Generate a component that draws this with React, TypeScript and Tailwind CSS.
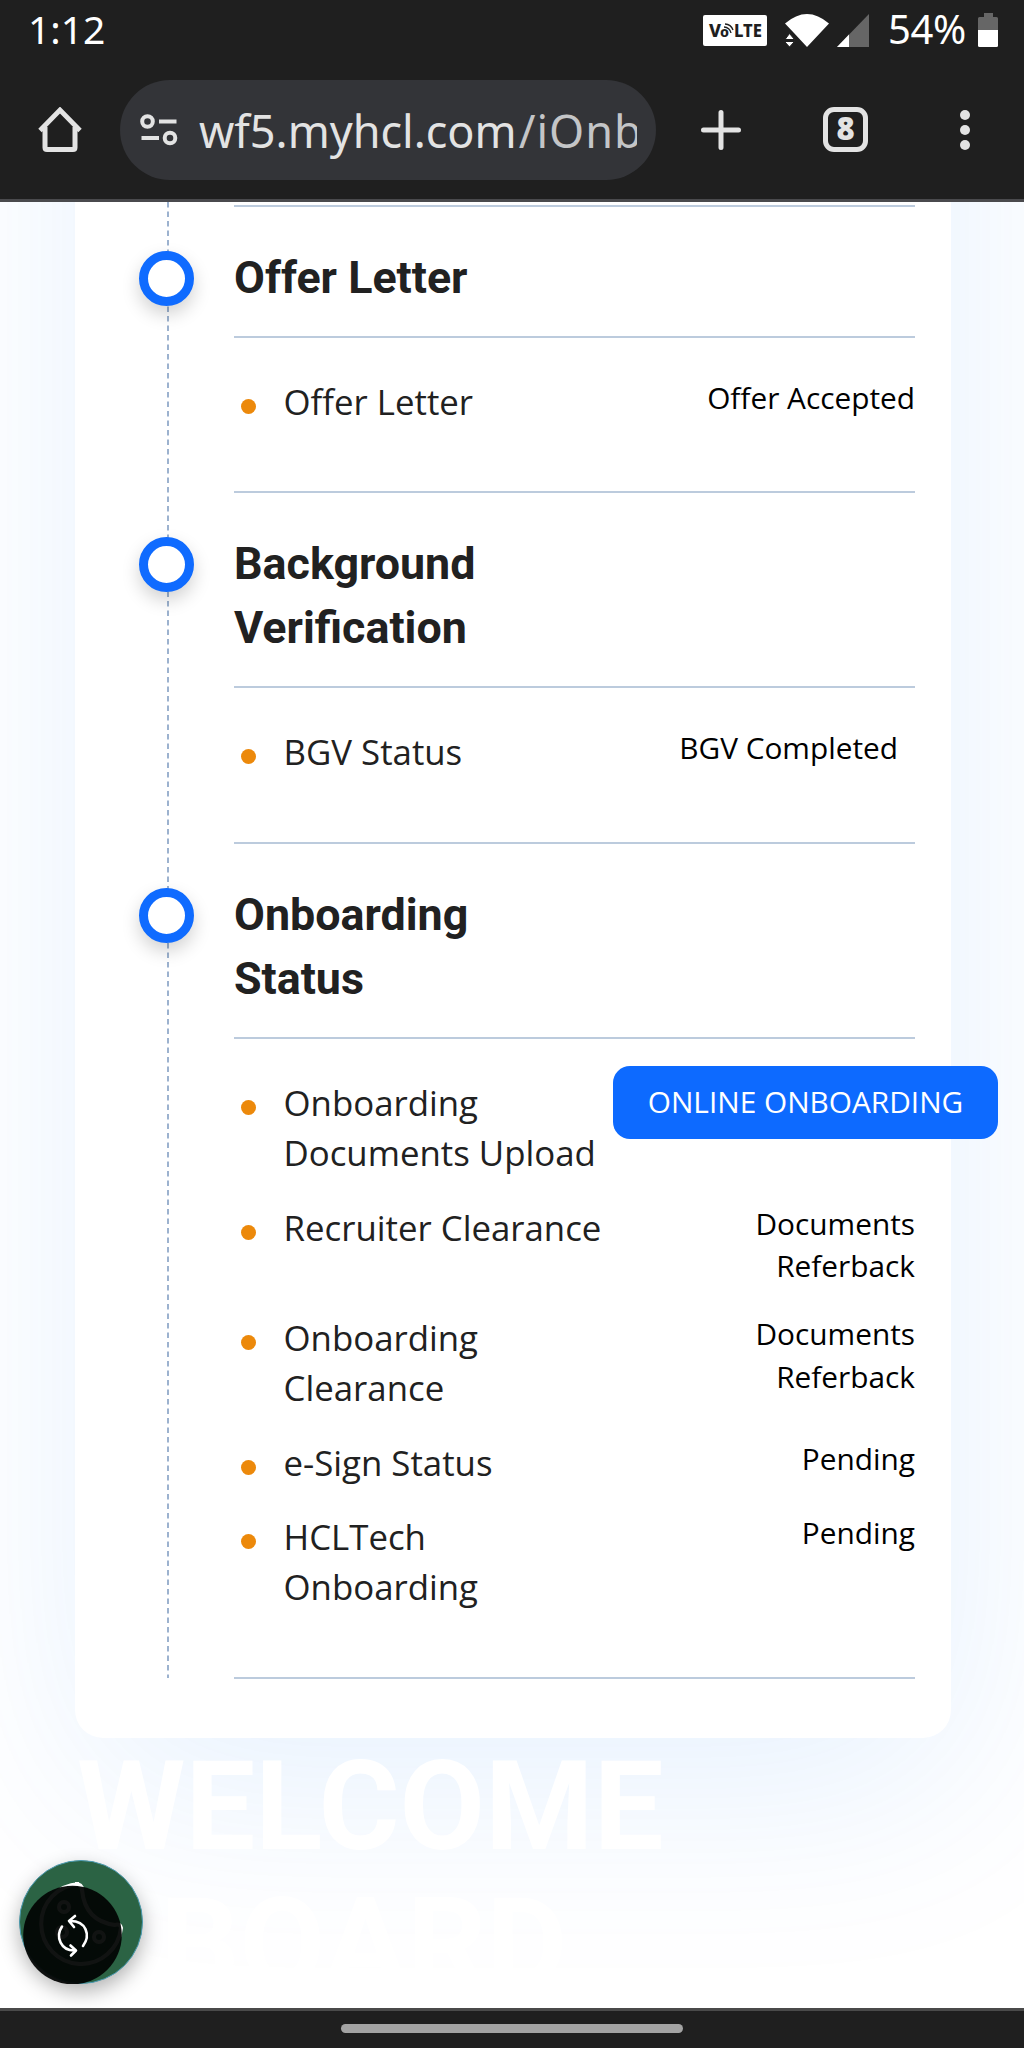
import type { ReactNode } from "react";

type Item = {
  label: ReactNode;
  status?: ReactNode;
  action?: string;
  inset?: boolean;
};

type Stage = {
  title: string;
  items: Item[];
};

const stages: Stage[] = [
  {
    title: "Offer Letter",
    items: [{ label: "Offer Letter", status: "Offer Accepted" }],
  },
  {
    title: "Background Verification",
    items: [{ label: "BGV Status", status: "BGV Completed", inset: true }],
  },
  {
    title: "Onboarding Status",
    items: [
      { label: "Onboarding Documents Upload", action: "ONLINE ONBOARDING" },
      { label: "Recruiter Clearance", status: "Documents Referback" },
      { label: "Onboarding Clearance", status: "Documents Referback" },
      { label: "e-Sign Status", status: "Pending" },
      { label: "HCLTech Onboarding", status: "Pending" },
    ],
  },
];

function StatusBar() {
  return (
    <div className="flex h-[60px] items-center pl-[28px] pr-[26px] text-white">
      <span className="pb-[2px] font-['Noto_Sans',sans-serif] text-[39px] leading-[58px]">1:12</span>
      <div className="ml-auto flex items-center">
        <svg width="64" height="31" viewBox="0 0 64 31" className="mr-[18px]">
          <rect width="64" height="31" rx="2" fill="#fff" />
          <g fill="#1f1f1f" fontFamily="Noto Sans, sans-serif" fontWeight="800">
            <text x="6" y="22" fontSize="17" textLength="12" lengthAdjust="spacingAndGlyphs">V</text>
            <text x="17" y="22" fontSize="14" textLength="9" lengthAdjust="spacingAndGlyphs">o</text>
            <text x="31" y="22" fontSize="17" textLength="28" lengthAdjust="spacingAndGlyphs">LTE</text>
          </g>
          <path d="M21 12a7 7 0 0 1 7 6M22 9a9 9 0 0 1 8 6" fill="none" stroke="#1f1f1f" strokeWidth="1.4" />
        </svg>
        <svg width="44" height="33" viewBox="0 0 44 33" className="mr-2">
          <path d="M0 9.500Q22-9.500 44 9.500L22 33 9 19Z" fill="#fff" />
          <path d="M4.500 19.500l5 6H0zM4.500 33l-5-5.500h10z" fill="#fff" stroke="#1f1f1f" strokeWidth="1" />
        </svg>
        <svg width="32" height="33" viewBox="0 0 32 33" className="mr-[19px]">
          <path d="M32 0V33H0Z" fill="#666" />
          <path d="M12 20.600V33H0Z" fill="#fff" />
        </svg>
        <span className="pb-[2px] font-['Noto_Sans',sans-serif] text-[40px] leading-[58px] tracking-[-0.300px]">54%</span>
        <svg width="20" height="34" viewBox="0 0 20 34" className="ml-[12px]">
          <path d="M6 0h9v4h3.500q1.500 0 1.500 1.500V17H0V5.500Q0 4 1.500 4H6Z" fill="#666" />
          <path d="M0 17h20v15.500q0 1.500-1.500 1.500h-17Q0 34 0 32.500Z" fill="#fff" />
        </svg>
      </div>
    </div>
  );
}

function BrowserBar() {
  return (
    <div className="flex h-[139px] items-center">
      <svg width="46" height="46" viewBox="0 0 46 46" className="ml-[37px]" fill="none" stroke="#e3e3e3" strokeWidth="5" strokeLinejoin="round">
        <path d="M3 23.500 23 3l20 20.500" strokeLinejoin="miter" strokeWidth="4.800" />
        <path d="M8 20v20.500q0 2 2 2h26q2 0 2-2V20" />
      </svg>
      <div className="ml-[37px] flex h-[100px] w-[536px] items-center rounded-full bg-[#333438] pl-5">
        <svg width="38" height="32" viewBox="0 0 38 32" fill="none" stroke="#e3e3e3" strokeWidth="4">
          <circle cx="7.500" cy="7.500" r="5.300" />
          <circle cx="30" cy="24" r="5.300" />
          <path d="M19 7.500h17.500M1.500 24H19" />
        </svg>
        <div className="ml-[21px] w-[438px] overflow-hidden whitespace-nowrap pt-[2px] font-['Noto_Sans',sans-serif] text-[45px] leading-[60px] text-[#e3e3e3]">
          wf5.myhcl.com<span className="ml-[2px] tracking-[1px] text-[#c4c5c7]">/iOnb</span>
        </div>
      </div>
      <svg width="40" height="40" viewBox="0 0 40 40" className="ml-[45px]" stroke="#e3e3e3" strokeWidth="5" strokeLinecap="round">
        <path d="M20 2.500v35M2.500 20h35" />
      </svg>
      <div className="ml-[82px] flex h-[45px] w-[45px] items-center justify-center rounded-[11px] border-[5px] border-[#e3e3e3] pb-[2px] font-['Noto_Sans',sans-serif] text-[31px] font-black leading-none text-[#e3e3e3]">
        8
      </div>
      <div className="ml-[92px] flex flex-col gap-[5px]">
        <span className="h-[10px] w-[10px] rounded-full bg-[#e3e3e3]" />
        <span className="h-[10px] w-[10px] rounded-full bg-[#e3e3e3]" />
        <span className="h-[10px] w-[10px] rounded-full bg-[#e3e3e3]" />
      </div>
    </div>
  );
}

function ItemRow({ item }: { item: Item }) {
  return (
    <li className="relative mb-[25px] flex">
      <span className="mt-[22px] ml-[7px] h-[15px] w-[15px] shrink-0 rounded-full bg-[#ec890b]" />
      <span className="ml-[27.500px] w-[325px] shrink-0 text-[34.800px] leading-[49.800px] text-[#212121]">{item.label}</span>
      {item.action ? (
        <button className="absolute top-[-12px] left-[379px] h-[73px] w-[385px] rounded-[17px] bg-[#0d6aff] text-[29.800px] text-white">
          {item.action}
        </button>
      ) : (
        <span className={`ml-auto text-right text-[29.800px] leading-[42.700px] text-black ${item.inset ? "w-[260px] pr-[17px]" : item.status === "Documents Referback" ? "w-[180px]" : "w-[240px]"}`}>
          {item.status}
        </span>
      )}
    </li>
  );
}

function StageSection({ stage }: { stage: Stage }) {
  return (
    <section className="relative border-t-2 border-[#bccbdd]">
      {/* timeline marker */}
      <span className="absolute top-[44px] left-[-95px] h-[55px] w-[55px] rounded-full border-[9.500px] border-[#0f6bff] bg-white shadow-[0_8px_18px_rgba(0,0,0,0.18)]" />
      <h2 className="w-[300px] pt-[38.500px] pb-[25.500px] font-['Roboto',sans-serif] text-[44.800px] font-bold leading-[64.500px] text-[#212121]">
        {stage.title}
      </h2>
      <ul className="border-t-2 border-[#bccbdd] pt-[39px] pb-[40px]">
        {stage.items.map((item, i) => (
          <ItemRow key={i} item={item} />
        ))}
      </ul>
    </section>
  );
}

function FloatingButtons() {
  return (
    <div className="absolute bottom-[24px] left-[19px] h-[124px] w-[124px] rounded-full border border-[#4b9ab0] bg-[#2b6344] shadow-[0_8px_20px_rgba(0,0,0,0.3)]">
      <svg width="124" height="124" viewBox="0 0 124 124" className="absolute -top-px -left-px" fill="none">
        <g stroke="#fff" strokeWidth="4">
          <path d="M60 24A40 40 0 1 0 102 68Q101 63 96 65Q66 61 63 30Q63 24 56 24Z" />
          <circle cx="45" cy="47" r="5" />
          <circle cx="80" cy="77" r="5" />
          <circle cx="43" cy="72" r="5" />
        </g>
        <circle cx="53.500" cy="75" r="49.300" fill="#020403" fillOpacity="0.94" />
        <g stroke="#fff" strokeWidth="2.600" strokeLinecap="round" strokeLinejoin="round">
          <path d="M43 66.500C36 77 42 91 56 90.500M51.500 85.500l5.500 5-5 5" />
          <path d="M64 86C72 75 67 61 51.500 61M56 56l-6 5 5 6" />
        </g>
      </svg>
    </div>
  );
}

export default function App() {
  return (
    <div className="flex h-[2048px] w-[1024px] flex-col overflow-hidden bg-white font-['Open_Sans',sans-serif]">
      <header className="relative z-10 h-[202px] shrink-0 border-b-[3px] border-[#4a4a4d] bg-[#1f1f1f]">
        <StatusBar />
        <BrowserBar />
      </header>

      <main className="relative h-[1806px] shrink-0 overflow-hidden">
        {/* card is scrolled, its top sits above the viewport */}
        <div className="relative -mt-[300px] ml-[75px] h-[1836px] w-[876px] rounded-[28px] bg-white pt-[303px] pr-[36px] pl-[159px] shadow-[8px_50px_210px_rgba(13,120,250,0.1)]">
          <svg width="2" height="1476" className="absolute top-[300px] left-[92px]">
            <path d="M1 0V1476" stroke="#9cb2cf" strokeWidth="2" strokeDasharray="5.500 4" />
          </svg>
          {stages.map((stage) => (
            <StageSection key={stage.title} stage={stage} />
          ))}
          <div className="border-t-2 border-[#bccbdd]" />
        </div>
        <h1 className="relative ml-[77px] font-['Roboto',sans-serif] text-[124px] font-bold leading-[137px] text-white">
          WELCOME
          <br />
          ABOARD
        </h1>
        <FloatingButtons />
      </main>

      <footer className="flex h-10 shrink-0 justify-center border-t-[3px] border-[#4a4a4a] bg-[#1f1f1f] pt-[13px]">
        <div className="h-[9px] w-[342px] rounded-full bg-[#a3a3a3]" />
      </footer>
    </div>
  );
}
